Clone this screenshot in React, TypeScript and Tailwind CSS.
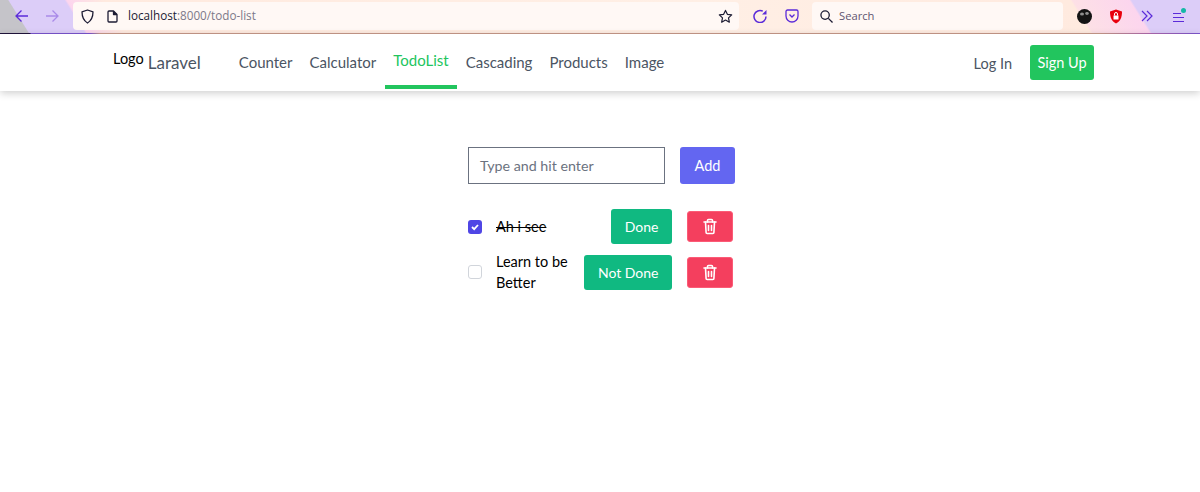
import React from "react";

function Trash() {
  return (
    <svg width="14" height="17" viewBox="0 0 14 17" fill="none" stroke="white" strokeWidth="1.6" strokeLinecap="round" strokeLinejoin="round">
      <path d="M1 4h12" />
      <path d="M4.500 4V2.500a1 1 0 0 1 1-1h3a1 1 0 0 1 1 1V4" />
      <path d="M2.500 4l.6 10.500a1 1 0 0 0 1 1h5.800a1 1 0 0 0 1-1L11.500 4" />
      <path d="M5.500 7.500v5M8.500 7.500v5" />
    </svg>
  );
}

function Toolbar() {
  return (
    <div className="flex h-[33px] items-center bg-[linear-gradient(58deg,#c5c4c9_0px,#c5c4c9_24px,#dccdf8_25px,#dccdf8_72px,#fcd5ee_74px,#fde0e6_90px,#ffeadf_106px,#ffefe5_600px,#ffeadf_925px,#fde0e6_927px,#fcd5ee_975px,#dccdf8_977px)] pb-px font-['Open_Sans',sans-serif]">
      <svg className="ml-[14px]" width="14" height="14" viewBox="0 0 14 14" fill="none" stroke="#5b2bd9" strokeWidth="1.3"><path d="M14 7H2M7.500 1.500 2 7l5.500 5.500" /></svg>
      <svg className="ml-[18px]" width="14" height="14" viewBox="0 0 14 14" fill="none" stroke="#a98ae8" strokeWidth="1.3"><path d="M0 7h12M6.500 1.500 12 7l-5.500 5.500" /></svg>
      <div className="ml-[13px] flex h-[28px] w-[666px] items-center rounded-[4px] bg-[#fff8f5]">
        <svg className="ml-[8px]" width="13" height="15" viewBox="0 0 13 15" fill="none" stroke="#1c1b33" strokeWidth="1.3" strokeLinejoin="round"><path d="M6.500 1 1 2.800c0 5 1.300 8.700 5.500 11.200 4.200-2.500 5.500-6.200 5.500-11.200z" /></svg>
        <svg className="ml-[13px]" width="11" height="13" viewBox="0 0 11 13" fill="#fff8f5" stroke="#1c1b33" strokeWidth="1.3" strokeLinejoin="round"><path d="M1 2a1 1 0 0 1 1-1h4.500L10 4.500V11a1 1 0 0 1-1 1H2a1 1 0 0 1-1-1z" /><path d="M6.500 1v3.500H10" fill="#1c1b33" /></svg>
        <span className="ml-[10px] text-[11.7px] text-[#1c1b33]">localhost<span className="text-[#7d7889]">:8000/todo-list</span></span>
        <svg className="ml-auto mr-[6px]" width="15" height="15" viewBox="0 0 16 16" fill="none" stroke="#1c1b33" strokeWidth="1.300" strokeLinejoin="round"><path d="m8 1.500 2 4.200 4.600.6-3.400 3.200.9 4.600L8 11.800l-4.100 2.300.9-4.600L1.400 6.300 6 5.700z" /></svg>
      </div>
      <svg className="ml-[14px]" width="14" height="14" viewBox="0 0 14 14" fill="none" stroke="#5b2bd9" strokeWidth="1.500"><path d="M13 7.500A6 6 0 1 1 9.800 2.200" /><path d="M13.500 1v4.500H9z" fill="#5b2bd9" stroke="none" /></svg>
      <svg className="ml-[18px]" width="14" height="14" viewBox="0 0 14 14" fill="none" stroke="#5b2bd9" strokeWidth="1.300"><path d="M1 2.500A1.500 1.500 0 0 1 2.500 1h9A1.500 1.500 0 0 1 13 2.500V7a6 6 0 0 1-12 0z" /><path d="m4.500 5.500 2.500 2.500 2.500-2.500" /></svg>
      <div className="ml-[13px] flex h-[28px] w-[251px] items-center rounded-[4px] bg-[#fff8f5]">
        <svg className="ml-[8px]" width="13" height="13" viewBox="0 0 14 14" fill="none" stroke="#1c1b33" strokeWidth="1.400"><circle cx="5.500" cy="5.500" r="4.500" /><path d="m9 9 4.500 4.500" /></svg>
        <span className="ml-[6px] text-[11.2px] text-[#5f5570]">Search</span>
      </div>
      <svg className="ml-[14px]" width="15" height="15" viewBox="0 0 15 15"><circle cx="7.500" cy="7.500" r="7.500" fill="#141414" /><ellipse cx="5" cy="5" rx="2" ry="1.600" fill="#8f8f8f" /><ellipse cx="10" cy="4.500" rx="1.800" ry="1.400" fill="#8f8f8f" /></svg>
      <svg className="ml-[17px]" width="14" height="15" viewBox="0 0 14 15"><path d="M7 .5 1 2.500c0 6 1.500 9.500 6 12 4.500-2.500 6-6 6-12z" fill="#e8000d" /><rect x="4.500" y="6.500" width="5" height="4" fill="#fff" /><path d="M5.500 6.500V5a1.500 1.500 0 0 1 3 0v1.500" fill="none" stroke="#fff" /></svg>
      <svg className="ml-[18px]" width="12" height="12" viewBox="0 0 12 12" fill="none" stroke="#5b2bd9" strokeWidth="1.200"><path d="m1 1 5 5-5 5M6 1l5 5-5 5" /></svg>
      <div className="relative ml-[20px] mt-[3px] flex flex-col gap-[2.5px]">
        <div className="h-[1.5px] w-[8px] bg-[#5b2bd9]" />
        <div className="h-[1.5px] w-[11px] bg-[#5b2bd9]" />
        <div className="h-[1.5px] w-[11px] bg-[#5b2bd9]" />
        <div className="absolute -right-[2px] -top-[5px] size-[5px] rounded-full bg-[#14b8a6]" />
      </div>
    </div>
  );
}

function NavLink({ children, active }: { children: React.ReactNode; active?: boolean }) {
  return (
    <a className={active ? "flex h-[55px] items-center border-b-4 border-[#22c55e] px-2 pt-[2px] text-[15px] text-[#22c55e]" : "flex h-[57px] items-center px-2 text-[15px] text-[#4b5563]"}>
      {children}
    </a>
  );
}

function Row({ label, done, action }: { label: React.ReactNode; done?: boolean; action: string }) {
  return (
    <div className="flex items-center">
      <div className={done ? "flex size-[14px] items-center justify-center rounded-[3px] bg-[#4f46e5]" : "size-[14px] rounded-[3px] border border-[#d1d5db] bg-white"}>
        {done && <svg width="10" height="10" viewBox="0 0 10 10" fill="none" stroke="white" strokeWidth="1.800"><path d="m2 5 2.200 2.200L8 3" /></svg>}
      </div>
      <div className={done ? "ml-[14px] text-black line-through" : "ml-[14px] w-[80px] leading-[21px] text-black"}>{label}</div>
      <button className="ml-auto flex h-[35px] items-center rounded-[3px] bg-[#10b981] px-[13.5px] text-[14px] text-white">{action}</button>
      <button className="ml-[15px] flex h-[31px] w-[46px] items-center justify-center rounded-[3px] border border-[#fb5b76] bg-[#f43f5e]"><Trash /></button>
    </div>
  );
}

export default function App() {
  return (
    <div className="h-[492px] overflow-hidden bg-white font-['Lato',sans-serif] text-[14.5px]">
      <Toolbar />
      <div className="h-px bg-[linear-gradient(90deg,#20143c_0,#20143c_30px,#7a55d0_31px,#7a55d0_90px,#c89a8a_100px,#c89a8a_1100px,#b06ab0_1150px,#7a55d0_1200px)]" />
      <nav className="relative flex h-[57px] items-start bg-white pl-[113px] pr-[106px] shadow-[0_2px_8px_rgba(0,0,0,0.2)]">
        <span className="mt-[14px] text-black">Logo</span>
        <span className="ml-[4px] mt-[16px] text-[17px] text-[#4b5563]">Laravel</span>
        <div className="ml-[30px] flex gap-px">
          <NavLink>Counter</NavLink>
          <NavLink>Calculator</NavLink>
          <NavLink active>TodoList</NavLink>
          <NavLink>Cascading</NavLink>
          <NavLink>Products</NavLink>
          <NavLink>Image</NavLink>
        </div>
        <span className="ml-auto mt-[19px] text-[#4b5563]">Log In</span>
        <button className="ml-[18px] mt-[11px] flex h-[35px] w-[64px] items-center justify-center rounded-[3px] bg-[#22c55e] text-white">Sign Up</button>
      </nav>
      <div className="flex justify-center pl-[3px] pt-[56px]">
        <main className="w-[267px]">
          <div className="flex items-center justify-between">
            <div className="flex h-[37px] w-[197px] items-center border border-[#6b7280] pl-[11px] text-[14.25px] text-[#6b7280]">Type and hit enter</div>
            <button className="h-[37px] w-[55px] rounded-[3px] bg-[#6366f1] text-white">Add</button>
          </div>
          <div className="mt-[25px] flex w-[265px] flex-col gap-[7px]">
            <Row label="Ah i see" done action="Done" />
            <Row label={<>Learn to be<br />Better</>} action="Not Done" />
          </div>
        </main>
      </div>
    </div>
  );
}
